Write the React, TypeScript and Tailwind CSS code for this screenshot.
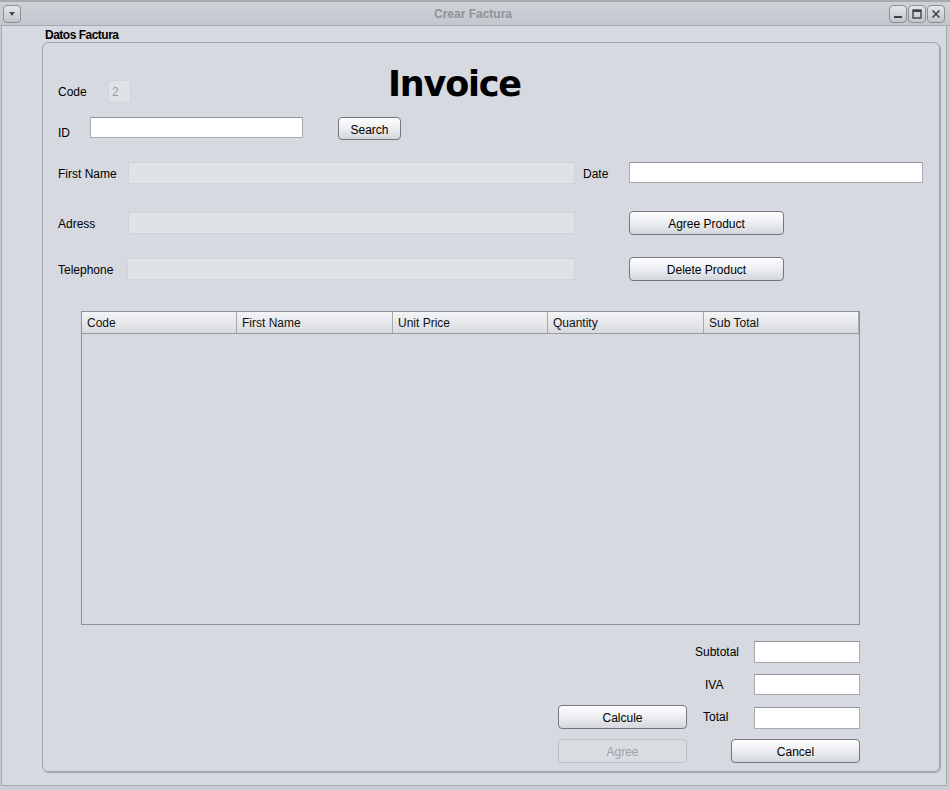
import React from 'react';

const font = { fontFamily: '"Liberation Sans", Arial, sans-serif' };

const btn =
  'flex items-center justify-center rounded-[4px] border border-[#74787e] bg-gradient-to-b from-[#fdfdfd] via-[#eceef1] to-[#d3d6db] pt-[2px] text-[12px] text-black shadow-[inset_0_1px_0_#ffffff]';
const btnOff =
  'flex items-center justify-center rounded-[4px] border border-[#bcc0c6] bg-[#d9dce1] pt-[2px] text-[12px] text-[#9da0a6]';
const field = 'border border-[#a7aab0] border-t-[#8f9298] bg-white';
const fieldOff = 'border border-[#d0d3d8] bg-[#dfe2e6]';

const columns = ['Code', 'First Name', 'Unit Price', 'Quantity', 'Sub Total'];
const colWidths = ['w-[155px]', 'w-[156px]', 'w-[155px]', 'w-[156px]', 'w-[155px]'];

function TitleButton({ children }: { children: React.ReactNode }) {
  return (
    <div className="flex h-[18px] w-[18px] items-center justify-center rounded-[4px] border border-[#8c9096] bg-gradient-to-b from-[#e4e6ea] to-[#c2c5cb]">
      {children}
    </div>
  );
}

export default function App() {
  return (
    <div className="flex h-[790px] w-[950px] flex-col bg-[#c9ccd2] text-[12px] leading-[14px] text-black" style={font}>
      {/* title bar */}
      <div className="relative flex h-[26px] items-center border-t-2 border-b border-t-[#a6aab1] border-b-[#a4a8b0] bg-gradient-to-b from-[#cfd2d7] to-[#c3c6cc]">
        <div className="ml-[3px]">
          <TitleButton>
            <svg width="8" height="6" viewBox="0 0 8 6">
              <path d="M1 1h6L4 5z" fill="#4a4d52" />
            </svg>
          </TitleButton>
        </div>
        <div className="flex-1 pl-[36px] text-center text-[12px] font-bold text-[#8f9399]">Crear Factura</div>
        <div className="mr-[5px] flex gap-[1px]">
          <TitleButton>
            <svg width="10" height="10" viewBox="0 0 10 10">
              <rect x="1" y="7" width="8" height="2" fill="#3f4247" />
            </svg>
          </TitleButton>
          <TitleButton>
            <svg width="10" height="10" viewBox="0 0 10 10">
              <rect x="1" y="1" width="8" height="8" fill="none" stroke="#3f4247" strokeWidth="1.4" />
              <rect x="1" y="1" width="8" height="2" fill="#3f4247" />
            </svg>
          </TitleButton>
          <TitleButton>
            <svg width="10" height="10" viewBox="0 0 10 10">
              <path d="M1.5 1.5l7 7M8.5 1.5l-7 7" stroke="#3f4247" strokeWidth="1.6" />
            </svg>
          </TitleButton>
        </div>
      </div>

      {/* window body */}
      <div className="ml-[1px] h-[760px] w-[946px] border-x border-b border-[#a4a8b0] bg-[#d6d9df]">
        <div className="ml-[43px] mt-[2px] text-[12px] font-bold tracking-[-0.5px]">Datos Factura</div>

        <div className="ml-[40px] flex h-[730px] w-[898px] flex-col rounded-[6px] border border-[#9fa3aa] shadow-[1px_1px_1px_rgba(0,0,0,0.22)]">
          {/* code + title */}
          <div className="mt-[17px] flex h-[45px] items-start">
            <div className="ml-[15px] mt-[25px] w-[50px]">Code</div>
            <div className={`${fieldOff} mt-[20px] flex h-[23px] w-[23px] items-center pl-[3px] text-[#9a9da3]`}>2</div>
            <div
              className="ml-[257px] mt-[4px] text-[35px] font-bold leading-[40px] tracking-[-1.2px]"
              style={{ fontFamily: '"DejaVu Sans", Verdana, sans-serif' }}
            >
              Invoice
            </div>
          </div>

          {/* id */}
          <div className="mt-[12px] flex items-start">
            <div className="ml-[15px] mt-[9px] w-[32px]">ID</div>
            <div className={`${field} h-[21px] w-[213px]`} />
            <button className={`${btn} ml-[35px] h-[23px] w-[63px]`}>Search</button>
          </div>

          {/* first name + date */}
          <div className="mt-[22px] flex items-start">
            <div className="ml-[15px] mt-[5px] w-[70px]">First Name</div>
            <div className={`${fieldOff} h-[22px] w-[447px]`} />
            <div className="ml-[8px] mt-[5px] w-[46px]">Date</div>
            <div className={`${field} h-[21px] w-[294px]`} />
          </div>

          {/* address */}
          <div className="mt-[27px] flex items-start">
            <div className="ml-[15px] mt-[6px] w-[70px]">Adress</div>
            <div className={`${fieldOff} mt-[1px] h-[22px] w-[447px]`} />
            <button className={`${btn} ml-[54px] h-[24px] w-[155px]`}>Agree Product</button>
          </div>

          {/* telephone */}
          <div className="mt-[22px] flex items-start">
            <div className="ml-[15px] mt-[6px] w-[69px]">Telephone</div>
            <div className={`${fieldOff} mt-[1px] h-[22px] w-[448px]`} />
            <button className={`${btn} ml-[54px] h-[24px] w-[155px]`}>Delete Product</button>
          </div>

          {/* table */}
          <div className="ml-[38px] mt-[30px] flex h-[314px] w-[779px] flex-col border border-[#8e9298]">
            <div className="flex h-[22px] border-b border-[#999da3] bg-gradient-to-b from-[#f4f5f7] to-[#d8dade]">
              {columns.map((c, i) => (
                <div
                  key={c}
                  className={`${colWidths[i]} flex items-center border-r border-[#a6aab0] pl-[5px] text-[#111]`}
                >
                  {c}
                </div>
              ))}
            </div>
            <div className="flex-1 bg-[#d6d9df]" />
          </div>

          {/* totals */}
          <div className="mt-[16px] flex items-start">
            <div className="ml-[652px] mt-[4px] w-[59px]">Subtotal</div>
            <div className={`${field} h-[22px] w-[106px]`} />
          </div>
          <div className="mt-[11px] flex items-start">
            <div className="ml-[662px] mt-[4px] w-[49px]">IVA</div>
            <div className={`${field} h-[21px] w-[106px]`} />
          </div>
          <div className="mt-[10px] flex items-start">
            <button className={`${btn} ml-[515px] h-[24px] w-[129px]`}>Calcule</button>
            <div className="ml-[16px] mt-[5px] w-[51px]">Total</div>
            <div className={`${field} mt-[2px] h-[22px] w-[106px]`} />
          </div>
          <div className="mt-[10px] flex items-start">
            <button className={`${btnOff} ml-[515px] h-[24px] w-[129px]`} disabled>
              Agree
            </button>
            <button className={`${btn} ml-[44px] h-[24px] w-[129px]`}>Cancel</button>
          </div>
        </div>
      </div>
    </div>
  );
}
